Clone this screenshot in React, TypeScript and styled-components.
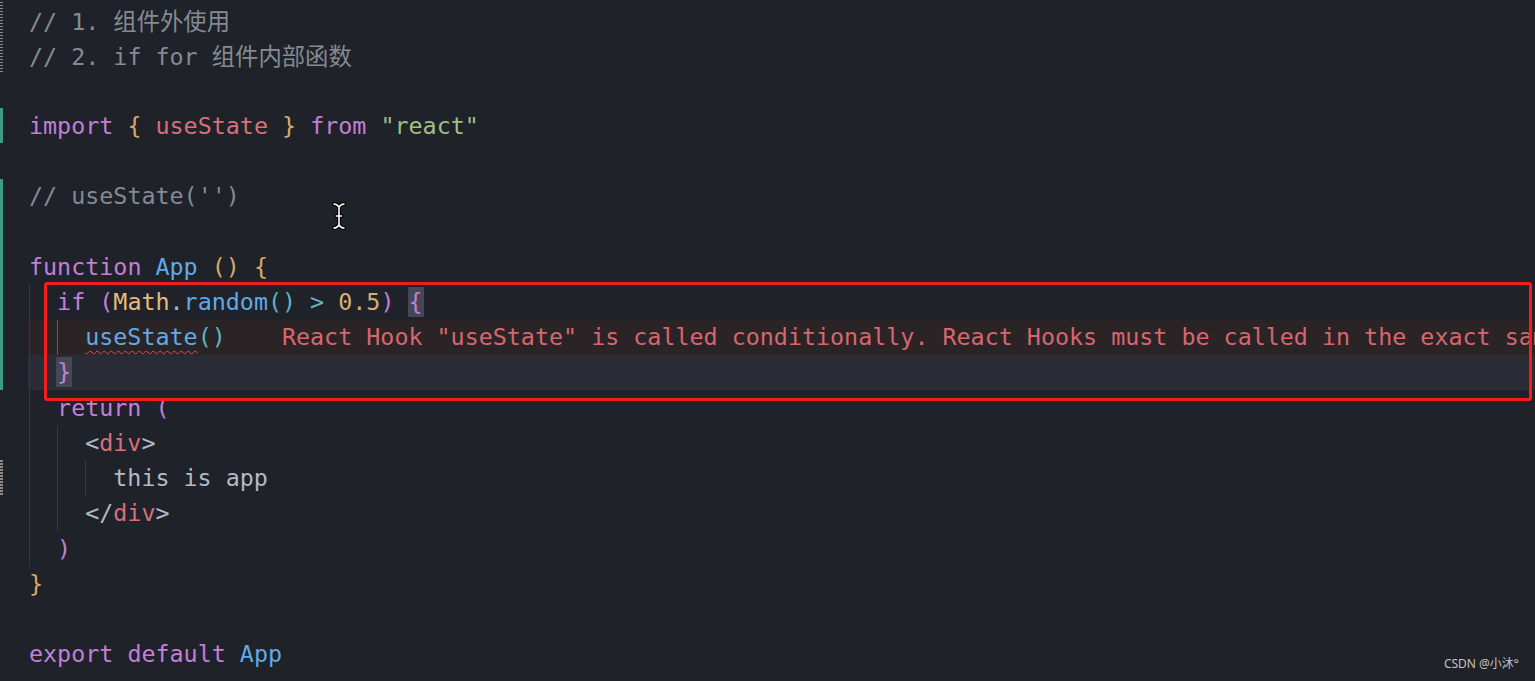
import React from "react";
import styled, { createGlobalStyle, css } from "styled-components";

const GlobalStyle = createGlobalStyle`
  html, body { margin: 0; padding: 0; background: #1f2228; overflow: hidden; }
  #root { width: 1535px; height: 681px; }
`;

const C = {
  comment: "#858a93",
  kw: "#c27fd8",
  red: "#d96f78",
  gold: "#d9a866",
  yellow: "#e2bd7c",
  str: "#a0bf85",
  blue: "#62a9e8",
  teal: "#5db6c0",
  num: "#d8b074",
  plain: "#b4bac4",
  err: "#d8666e",
};

const Editor = styled.div`
  position: relative;
  width: 1535px;
  height: 681px;
  box-sizing: border-box;
  padding-top: 2.4px;
  background: #1f2228;
  display: flex;
  flex-direction: column;
  font-family: "DejaVu Sans Mono", "Noto Sans CJK SC", monospace;
  font-size: 23.35px;
  overflow: hidden;
`;

type Mark = "added" | "hatched" | undefined;
type Bg = "error" | "current" | undefined;

const Row = styled.div`
  display: grid;
  grid-template-columns: 28px 1fr;
  height: 35.24px;
  flex: none;
`;

const Gutter = styled.div<{ $mark?: Mark }>`
  position: relative;
  ${(p) =>
    p.$mark === "added" &&
    css`
      background: linear-gradient(to right, #3d9e7d 0 3px, transparent 3px);
    `}
  ${(p) =>
    p.$mark === "hatched" &&
    css`
      background: repeating-linear-gradient(
          to bottom,
          #8d8d86 0 1.5px,
          transparent 1.5px 3px
        )
        0 0 / 3px 100% no-repeat;
    `}
`;

const Code = styled.div<{ $bg?: Bg }>`
  display: flex;
  align-items: center;
  min-width: 0;
  overflow: hidden;
  padding-left: 1px;
  color: ${C.plain};
  background: ${(p) =>
    p.$bg === "error" ? "#2a2427" : p.$bg === "current" ? "#292c34" : "transparent"};
`;

const Text = styled.span`
  white-space: pre;
`;

const Indent = styled.span<{ $active?: boolean }>`
  flex: none;
  align-self: stretch;
  width: 2ch;
  box-sizing: border-box;
  border-left: 1px solid ${(p) => (p.$active ? "#5b5f68" : "#363941")};
`;

const T = styled.span<{ $c: string }>`
  color: ${(p) => p.$c};
`;

const Match = styled.span<{ $c: string }>`
  color: ${(p) => p.$c};
  background: #434854;
  box-shadow: 0 0 0 1px #434854;
`;

const Squiggle = styled.span`
  color: ${C.blue};
  text-decoration: underline wavy #d0545c;
  text-decoration-thickness: 1px;
  text-underline-offset: 5px;
`;

const ErrorLens = styled.span`
  color: ${C.err};
`;

const Highlight = styled.div`
  position: absolute;
  left: 44px;
  top: 282px;
  width: 1488px;
  height: 119px;
  box-sizing: border-box;
  border: 3px solid #f51c1c;
  border-radius: 3px;
  pointer-events: none;
`;

const Cursor = styled.svg`
  position: absolute;
  left: 332px;
  top: 201px;
`;

const Watermark = styled.div`
  position: absolute;
  right: 16px;
  bottom: 9px;
  font-family: "Noto Sans", "Noto Sans CJK SC", sans-serif;
  font-size: 12px;
  color: #c4c4c4;
`;

type LineProps = {
  mark?: Mark;
  bg?: Bg;
  indent?: number;
  active?: number;
  children?: React.ReactNode;
};

const Line = ({ mark, bg, indent = 0, active = -1, children }: LineProps) => (
  <Row>
    <Gutter $mark={mark} />
    <Code $bg={bg}>
      {Array.from({ length: indent }, (_, i) => (
        <Indent key={i} $active={i === active} />
      ))}
      {children && <Text>{children}</Text>}
    </Code>
  </Row>
);

const ERROR_MSG =
  'React Hook "useState" is called conditionally. React Hooks must be called in the exact same order in every component render.';

export default function App() {
  return (
    <>
      <GlobalStyle />
      <Editor>
        <Line mark="hatched">
          <T $c={C.comment}>// 1. 组件外使用</T>
        </Line>
        <Line mark="hatched">
          <T $c={C.comment}>// 2. if for 组件内部函数</T>
        </Line>
        <Line />
        <Line mark="added">
          <T $c={C.kw}>import</T> <T $c={C.gold}>{"{"}</T>{" "}
          <T $c={C.red}>useState</T> <T $c={C.gold}>{"}"}</T>{" "}
          <T $c={C.kw}>from</T> <T $c={C.str}>"react"</T>
        </Line>
        <Line />
        <Line mark="added">
          <T $c={C.comment}>// useState('')</T>
        </Line>
        <Line mark="added" />
        <Line mark="added">
          <T $c={C.kw}>function</T> <T $c={C.blue}>App</T>{" "}
          <T $c={C.gold}>()</T> <T $c={C.gold}>{"{"}</T>
        </Line>
        <Line mark="added" indent={1}>
          <T $c={C.kw}>if</T> <T $c={C.kw}>(</T>
          <T $c={C.yellow}>Math</T>
          <T $c={C.plain}>.</T>
          <T $c={C.blue}>random</T>
          <T $c={C.teal}>()</T> <T $c={C.teal}>{">"}</T>{" "}
          <T $c={C.num}>0.5</T>
          <T $c={C.kw}>)</T> <Match $c={C.kw}>{"{"}</Match>
        </Line>
        <Line mark="added" bg="error" indent={2} active={1}>
          <Squiggle>useState</Squiggle>
          <T $c={C.teal}>()</T>
          {"    "}
          <ErrorLens>{ERROR_MSG}</ErrorLens>
        </Line>
        <Line mark="added" bg="current" indent={1}>
          <Match $c={C.kw}>{"}"}</Match>
        </Line>
        <Line indent={1}>
          <T $c={C.kw}>return</T> <T $c={C.kw}>(</T>
        </Line>
        <Line indent={2}>
          <T $c={C.plain}>{"<"}</T>
          <T $c={C.red}>div</T>
          <T $c={C.plain}>{">"}</T>
        </Line>
        <Line mark="hatched" indent={3}>
          <T $c={C.plain}>this is app</T>
        </Line>
        <Line indent={2}>
          <T $c={C.plain}>{"</"}</T>
          <T $c={C.red}>div</T>
          <T $c={C.plain}>{">"}</T>
        </Line>
        <Line indent={1}>
          <T $c={C.kw}>)</T>
        </Line>
        <Line>
          <T $c={C.gold}>{"}"}</T>
        </Line>
        <Line />
        <Line>
          <T $c={C.kw}>export</T> <T $c={C.kw}>default</T>{" "}
          <T $c={C.blue}>App</T>
        </Line>
        <Highlight />
        <Cursor width="14" height="30" viewBox="0 0 14 30">
          <path
            d="M2 3 Q5 3 7 6 Q9 3 12 3 M7 6 V24 M2 27 Q5 27 7 24 Q9 27 12 27 M4.5 15 H9.5"
            fill="none"
            stroke="#000"
            strokeWidth="4"
            strokeLinecap="round"
          />
          <path
            d="M2 3 Q5 3 7 6 Q9 3 12 3 M7 6 V24 M2 27 Q5 27 7 24 Q9 27 12 27 M4.5 15 H9.5"
            fill="none"
            stroke="#fff"
            strokeWidth="1.6"
            strokeLinecap="round"
          />
        </Cursor>
        <Watermark>CSDN @小沐°</Watermark>
      </Editor>
    </>
  );
}
